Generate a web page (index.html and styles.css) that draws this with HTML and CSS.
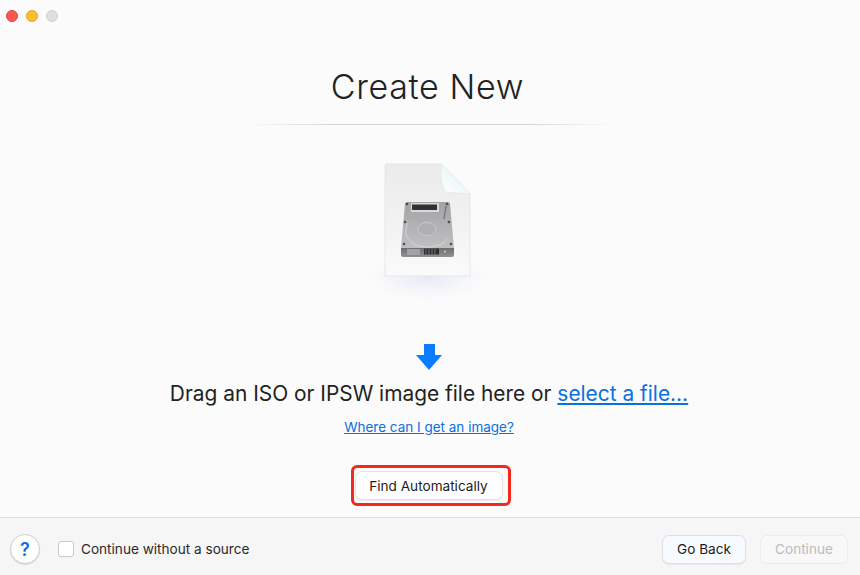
FILE: index.html
```html
<!DOCTYPE html>
<html lang="en">

<head>
    <title>Create New</title>
    <link rel="stylesheet" href="styles.css">
</head>

<body>
    <div class="window">
        <div class="titlebar">
            <span class="light light-close"></span>
            <span class="light light-min"></span>
            <span class="light light-max"></span>
        </div>

        <div class="main">
            <h1 class="title">Create New</h1>
            <div class="divider"></div>

            <svg class="doc-icon" width="140" height="150" viewBox="0 0 140 150">
                <defs>
                    <linearGradient id="paper" x1="0" y1="0" x2="0" y2="1">
                        <stop offset="0" stop-color="#ebebeb" />
                        <stop offset="0.55" stop-color="#f2f2f2" />
                        <stop offset="1" stop-color="#fbfbfb" />
                    </linearGradient>
                    <linearGradient id="fold" x1="0" y1="1" x2="1" y2="0">
                        <stop offset="0" stop-color="#ffffff" />
                        <stop offset="1" stop-color="#dff0f1" />
                    </linearGradient>
                    <linearGradient id="disk" x1="0" y1="0" x2="0" y2="1">
                        <stop offset="0" stop-color="#a3a3a5" />
                        <stop offset="1" stop-color="#c0c0c2" />
                    </linearGradient>
                    <linearGradient id="disk-front" x1="0" y1="0" x2="0" y2="1">
                        <stop offset="0" stop-color="#6d6d70" />
                        <stop offset="1" stop-color="#929295" />
                    </linearGradient>
                    <radialGradient id="glow" cx="0.5" cy="0.5" r="0.5">
                        <stop offset="0" stop-color="#d3dbf0" stop-opacity="0.55" />
                        <stop offset="1" stop-color="#e6eaf5" stop-opacity="0" />
                    </radialGradient>
                </defs>
                <ellipse cx="70" cy="114" rx="62" ry="24" fill="url(#glow)" />
                <path d="M30 1H84L113 31V113H28V3C28 2 29 1 30 1Z" fill="url(#paper)" stroke="#e3e3e3" stroke-width="0.8" />
                <path d="M84 1C83 18 87 29 90 29L113 31Z" fill="url(#fold)" stroke="#dfe6e6" stroke-width="0.6" />

                <g class="disk">
                    <path d="M50 39H91C92 39 93 40 93 41L97 85H44L48 41C48 40 49 39 50 39Z" fill="url(#disk)" />
                    <path d="M44 85H97V92C97 93 96 94 95 94H46C45 94 44 93 44 92Z" fill="url(#disk-front)" />
                    <path d="M50 86H63V92H50Z" fill="#a2a2a5" />
                    <path d="M67 85.500H82V91.500H67Z" fill="#2f2f33" />
                    <path d="M69 85.500V91.500M72 85.500V91.500M75 85.500V91.500M78 85.500V91.500" stroke="#8a8a8d" stroke-width="0.8" />
                    <circle cx="88" cy="88.500" r="1" fill="#e8d66c" />
                    <rect x="54" y="40" width="28" height="9" fill="#d8d8d8" />
                    <rect x="55" y="41.500" width="25" height="5.500" fill="#303035" />
                    <path d="M89 43L87 56" stroke="#6f6f72" stroke-width="1.200" />
                    <path d="M51 60C44 72 54 84 70 84C79 84 87 81 90 76" fill="none" stroke="#d6d6d8" stroke-width="1" />
                    <ellipse cx="70" cy="66" rx="9" ry="6.500" fill="#b0b0b2" stroke="#c9c9cb" stroke-width="1" />
                    <circle cx="50" cy="41" r="1.300" fill="#505054" />
                    <circle cx="90" cy="41" r="1.300" fill="#505054" />
                    <circle cx="48" cy="59" r="1.300" fill="#505054" />
                    <circle cx="92" cy="59" r="1.300" fill="#505054" />
                    <circle cx="47" cy="81" r="1.300" fill="#505054" />
                    <circle cx="94" cy="81" r="1.300" fill="#505054" />
                </g>
            </svg>

            <svg class="arrow-icon" width="26" height="26" viewBox="0 0 26 26">
                <path d="M8 0H19V11H26L13 26L0 11H8Z" fill="#0a7cff" />
            </svg>

            <p class="drag-text">Drag an ISO or IPSW image file here or <a href="#">select a file...</a></p>
            <a class="help-link" href="#">Where can I get an image?</a>

            <div class="highlight">
                <button class="btn btn-find">Find Automatically</button>
            </div>
        </div>

        <div class="footer">
            <button class="help-btn">?</button>
            <label class="check-row">
                <span class="checkbox"></span>
                Continue without a source
            </label>
            <div class="footer-actions">
                <button class="btn btn-back">Go Back</button>
                <button class="btn btn-continue" disabled>Continue</button>
            </div>
        </div>
    </div>
</body>

</html>
```

FILE: styles.css
```css
:root {
    --bg-color: #fbfbfb;
    --footer-color: #f6f6f6;
    --font-color: #222;
    --link-color: #0a70e0;
}

* {
    box-sizing: border-box;
}

body {
    font-family: Inter, 'Noto Sans', sans-serif;
    margin: 0;
    padding: 0;
    background-color: var(--bg-color);
    color: var(--font-color);
}

.window {
    display: flex;
    flex-direction: column;
    width: 860px;
    height: 575px;
    overflow: hidden;
}

.titlebar {
    display: flex;
    flex: none;
    gap: 8px;
    height: 32px;
    padding: 10px 6px 0;
}

.light {
    width: 12px;
    height: 12px;
    border-radius: 50%;
}

.light-close {
    background-color: #fc5753;
    border: 1px solid #e5423f;
}

.light-min {
    background-color: #fdbc2e;
    border: 1px solid #e3a326;
}

.light-max {
    background-color: #dedede;
    border: 1px solid #d0d0d0;
}

.main {
    display: flex;
    flex: 1;
    flex-direction: column;
    align-items: center;
    border-bottom: 1px solid #dedede;
}

.title {
    margin: 31px 5px 0 0;
    font-size: 34px;
    font-weight: 300;
    line-height: 48px;
    letter-spacing: 0.65px;
}

.divider {
    flex: none;
    width: 370px;
    height: 1px;
    margin-top: 13px;
    background: linear-gradient(to right, rgba(210,210,210,0), #d4d4d4 25%, #d4d4d4 75%, rgba(210,210,210,0));
}

.doc-icon {
    flex: none;
    margin: 38px 6px 0 0;
}

.disk {
    filter: blur(0.35px);
}

.arrow-icon {
    flex: none;
    margin: 31px 2px 0 0;
}

.drag-text {
    margin: 11px 2px 0 0;
    font-size: 20.9px;
    line-height: 26px;
}

.drag-text a,
.help-link {
    color: var(--link-color);
    text-decoration: underline;
}

.help-link {
    margin: 10px 2px 0 0;
    font-size: 13.5px;
    line-height: 20px;
}

.highlight {
    display: flex;
    flex: none;
    width: 160px;
    height: 41px;
    margin: 28px 0 0 2px;
    padding: 3px 0 0 0;
    border: 3px solid #f5281d;
    border-radius: 6px;
}

.btn {
    height: 29px;
    border: 1px solid #e2e2e2;
    border-radius: 7px;
    font-family: inherit;
    font-size: 13.6px;
    color: #1c1c1c;
}

.btn-find {
    width: 148px;
    margin-left: 1px;
    padding: 0 1px 0 0;
    background-color: #fff;
    box-shadow: 0 1px 1px rgba(0,0,0,0.08);
}

.footer {
    display: flex;
    flex: none;
    align-items: center;
    height: 57px;
    padding: 5px 12px 0 10px;
    background-color: var(--footer-color);
}

.help-btn {
    width: 30px;
    height: 30px;
    padding: 0;
    border: 1px solid #cfcfcf;
    border-radius: 50%;
    background-color: #fff;
    box-shadow: 0 1px 1px rgba(0,0,0,0.12);
    font-family: inherit;
    font-size: 18px;
    font-weight: 600;
    color: #0a70e8;
}

.check-row {
    display: flex;
    align-items: center;
    gap: 7px;
    margin-left: 18px;
    font-size: 13.6px;
    color: #2a2a2a;
}

.checkbox {
    width: 16px;
    height: 16px;
    border: 1px solid #c9c9c9;
    border-radius: 3px;
    background-color: #fff;
}

.footer-actions {
    display: flex;
    gap: 14px;
    margin-left: auto;
}

.btn-back {
    width: 84px;
    background-color: #f7fbff;
    border-color: #dcdfe3;
    box-shadow: 0 1px 1px rgba(0,0,0,0.06);
}

.btn-continue {
    width: 88px;
    background-color: #f8f8f8;
    border-color: #ececec;
    color: #bcbcbc;
}
```
